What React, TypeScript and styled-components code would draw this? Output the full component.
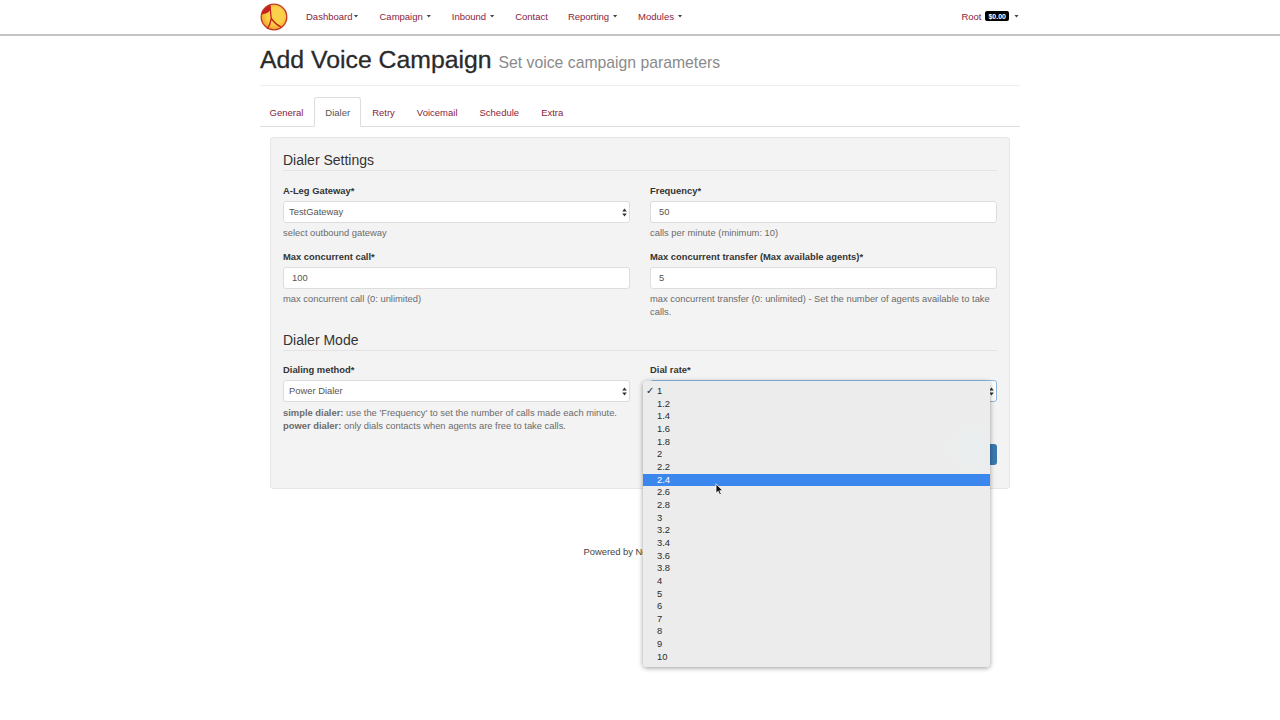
import styled, { createGlobalStyle } from "styled-components";

const GlobalStyle = createGlobalStyle`
  html, body {
    margin: 0;
    padding: 0;
    background: #fff;
  }
  body {
    font-family: "Liberation Sans", Arial, sans-serif;
    font-size: 10px;
    color: #333;
    height: 720px;
    overflow: hidden;
  }
`;

const Navbar = styled.nav`
  height: 34px;
  border-bottom: 2px solid #c4c4c4;
  display: flex;
  justify-content: center;
`;

const NavInner = styled.div`
  width: 760px;
  display: flex;
  align-items: center;
  padding-bottom: 2px;
`;

const Logo = styled.svg`
  width: 28px;
  height: 28px;
  margin: 2px 18px 0 0;
  flex: none;
`;

const NavLink = styled.a<{ $gap?: number }>`
  color: #8a1c3c;
  font-size: 9.5px;
  margin-right: ${(p) => p.$gap ?? 20}px;
  display: inline-flex;
  align-items: center;
`;

const Caret = styled.span<{ $left?: number; $right?: number }>`
  display: inline-block;
  width: 5px;
  height: 3px;
  margin-left: ${(p) => p.$left ?? 3.5}px;
  margin-right: ${(p) => p.$right ?? 0.5}px;
  background: #444;
  clip-path: polygon(0 0, 100% 0, 50% 100%);
`;

const NavRight = styled.div`
  margin-left: auto;
  display: flex;
  align-items: center;
  margin-right: 1px;
`;

const Badge = styled.span`
  background: #000;
  color: #fff;
  font-size: 7px;
  font-weight: bold;
  border-radius: 2px;
  padding: 1.500px 3px;
  margin-left: 4px;
`;

const Page = styled.main`
  width: 760px;
  margin: 0 auto;
`;

const Header = styled.header`
  height: 50px;
  border-bottom: 1px solid #eee;
  display: flex;
  align-items: baseline;
  padding-top: 8px;
  box-sizing: border-box;
`;

const Title = styled.h1`
  margin: 0;
  font-size: 24.8px;
  font-weight: normal;
  -webkit-text-stroke: 0.3px #2a2a2a;
  color: #2a2a2a;
  line-height: 32px;
`;

const Subtitle = styled.small`
  font-size: 15.75px;
  color: #8a8a8a;
  margin-left: 7px;
`;

const Tabs = styled.div`
  margin-top: 11px;
  height: 29px;
  border-bottom: 1px solid #ddd;
  display: flex;
`;

const Tab = styled.a<{ $active?: boolean }>`
  height: 30px;
  padding: 0 10px;
  display: flex;
  align-items: center;
  font-size: 9.5px;
  box-sizing: border-box;
  border-radius: 3px 3px 0 0;
  color: ${(p) => (p.$active ? "#555" : "#8a1c3c")};
  border: 1px solid ${(p) => (p.$active ? "#ddd" : "transparent")};
  border-bottom-color: ${(p) => (p.$active ? "#fff" : "transparent")};
  background: ${(p) => (p.$active ? "#fff" : "transparent")};
  &:first-child {
    margin-left: -1.5px;
  }
`;

const Well = styled.section`
  margin: 10px 10px 0;
  height: 352px;
  box-sizing: border-box;
  background: #f3f3f3;
  border: 1px solid #e6e6e6;
  border-radius: 3px;
  padding: 12px 12px 0;
`;

const Legend = styled.h2<{ $after: number }>`
  margin: 0 0 ${(p) => p.$after}px;
  font-size: 14px;
  font-weight: normal;
  color: #333;
  line-height: 20px;
  height: 21px;
  border-bottom: 1px solid #e4e4e4;
  box-sizing: border-box;
`;

const FormGrid = styled.div`
  display: grid;
  grid-template-columns: 347px 347px;
  column-gap: 20px;
`;

const Field = styled.div<{ $height: number }>`
  height: ${(p) => p.$height}px;
`;

const Label = styled.label`
  display: block;
  font-size: 9.4px;
  font-weight: bold;
  color: #333;
  line-height: 12px;
  margin-bottom: 4px;
`;

const Control = styled.div<{ $focused?: boolean }>`
  height: 22px;
  box-sizing: border-box;
  background: #fff;
  border: 1px solid ${(p) => (p.$focused ? "#8fb8dc" : "#ddd")};
  border-radius: 3px;
  display: flex;
  align-items: center;
  justify-content: space-between;
  padding: 0 2px 2px 5px;
  font-size: 9.4px;
  color: #555;
`;

const InputControl = styled(Control)`
  padding-left: 8px;
`;

const Arrows = styled.svg`
  width: 5px;
  height: 9px;
  margin-top: 2px;
`;

const Help = styled.p`
  margin: 3px 0 0;
  font-size: 9.4px;
  line-height: 13px;
  color: #6b6b6b;
`;

const ModeHelp = styled(Help)`
  margin-top: 4px;
`;

const SaveButton = styled.div`
  height: 21px;
  width: 60px;
  margin: 42px 0 0 auto;
  background: #3a78ae;
  border-radius: 3px;
`;

const Footer = styled.footer`
  margin-top: 57px;
  text-align: center;
  font-size: 9.4px;
  color: #444;
`;

const Popup = styled.ul`
  position: absolute;
  left: 643px;
  top: 381px;
  width: 347px;
  height: 286px;
  margin: 0;
  padding: 4px 0 0;
  box-sizing: border-box;
  list-style: none;
  background: radial-gradient(circle at 330px 66px, #e8eef0 0, #ececec 26px);
  border-radius: 4px;
  box-shadow: 0 1px 5px rgba(0, 0, 0, 0.4);
`;

const Option = styled.li<{ $hover?: boolean }>`
  position: relative;
  height: 12.66px;
  line-height: 12.66px;
  padding-left: 14px;
  font-size: 9.4px;
  color: ${(p) => (p.$hover ? "#fff" : "#2b2b2b")};
  background: ${(p) => (p.$hover ? "#3b87ee" : "transparent")};
`;

const Check = styled.span`
  position: absolute;
  left: 3px;
  top: 0;
  font-size: 10px;
`;

const Cursor = styled.svg`
  position: absolute;
  left: 715px;
  top: 483px;
  width: 9px;
  height: 13px;
`;

const RATES = ["1", "1.2", "1.4", "1.6", "1.8", "2", "2.2", "2.4", "2.6", "2.8", "3", "3.2", "3.4", "3.6", "3.8", "4", "5", "6", "7", "8", "9", "10"];

const SelectArrows = () => (
  <Arrows viewBox="0 0 5 9">
    <path d="M2.5 0.500 4.800 3.600H0.200zM2.5 8.500 0.200 5.400h4.600z" fill="#333" />
  </Arrows>
);

const App = () => {
  return (
    <>
      <GlobalStyle />
      <Navbar>
        <NavInner>
          <Logo viewBox="0 0 28 28">
            <defs>
              <radialGradient id="logoFill" cx="0.55" cy="0.45" r="0.6">
                <stop offset="0.55" stopColor="#fbd04a" />
                <stop offset="1" stopColor="#ee9a22" />
              </radialGradient>
            </defs>
            <circle cx="14" cy="14" r="12.8" fill="url(#logoFill)" stroke="#c23a24" strokeWidth="1.300" />
            <path d="M1.500 11.500C3 6.500 6 3.500 10 2c.8 3 .6 5-1 6.500-2 1.800-4.500 2.600-7.500 3z" fill="#c4231d" />
            <path d="M10 2.500c.4 4.500.6 9 1.300 13M11.300 15.500c-.8 4-2 7.500-4 10.500M11.300 15.500c2.500 3.500 5.500 6.500 9.700 8.500" fill="none" stroke="#c4231d" strokeWidth="1.300" />
          </Logo>
          <NavLink>Dashboard<Caret $left={1} $right={1} /></NavLink>
          <NavLink>Campaign <Caret /></NavLink>
          <NavLink>Inbound <Caret /></NavLink>
          <NavLink>Contact</NavLink>
          <NavLink>Reporting <Caret /></NavLink>
          <NavLink>Modules <Caret /></NavLink>
          <NavRight>
            <NavLink $gap={0}>Root<Badge>$0.00</Badge><Caret $left={5} $right={0} /></NavLink>
          </NavRight>
        </NavInner>
      </Navbar>
      <Page>
        <Header>
          <Title>Add Voice Campaign</Title>
          <Subtitle>Set voice campaign parameters</Subtitle>
        </Header>
        <Tabs>
          <Tab>General</Tab>
          <Tab $active>Dialer</Tab>
          <Tab>Retry</Tab>
          <Tab>Voicemail</Tab>
          <Tab>Schedule</Tab>
          <Tab>Extra</Tab>
        </Tabs>
        <Well>
          <Legend $after={14}>Dialer Settings</Legend>
          <FormGrid>
            <Field $height={66}>
              <Label>A-Leg Gateway*</Label>
              <Control>TestGateway<SelectArrows /></Control>
              <Help>select outbound gateway</Help>
            </Field>
            <Field $height={66}>
              <Label>Frequency*</Label>
              <InputControl>50</InputControl>
              <Help>calls per minute (minimum: 10)</Help>
            </Field>
            <Field $height={79}>
              <Label>Max concurrent call*</Label>
              <InputControl>100</InputControl>
              <Help>max concurrent call (0: unlimited)</Help>
            </Field>
            <Field $height={79}>
              <Label>Max concurrent transfer (Max available agents)*</Label>
              <InputControl>5</InputControl>
              <Help>max concurrent transfer (0: unlimited) - Set the number of agents available to take calls.</Help>
            </Field>
          </FormGrid>
          <Legend $after={13}>Dialer Mode</Legend>
          <FormGrid>
            <Field $height={60}>
              <Label>Dialing method*</Label>
              <Control>Power Dialer<SelectArrows /></Control>
              <ModeHelp>
                <strong>simple dialer:</strong> use the 'Frequency' to set the number of calls made each minute.
                <br />
                <strong>power dialer:</strong> only dials contacts when agents are free to take calls.
              </ModeHelp>
            </Field>
            <Field $height={60}>
              <Label>Dial rate*</Label>
              <Control $focused>1<SelectArrows /></Control>
              <SaveButton />
            </Field>
          </FormGrid>
        </Well>
        <Footer>Powered by Newfies-Dialer</Footer>
      </Page>
      <Popup>
        {RATES.map((rate) => (
          <Option key={rate} $hover={rate === "2.4"}>
            {rate === "1" && <Check>✓</Check>}
            {rate}
          </Option>
        ))}
      </Popup>
      <Cursor viewBox="0 0 9 13">
        <path d="M1 0.800v9.500l2.200-2 1.500 3.500 1.600-.7-1.500-3.400h3z" fill="#111" stroke="#fff" strokeWidth="0.8" />
      </Cursor>
    </>
  );
};

export default App;
